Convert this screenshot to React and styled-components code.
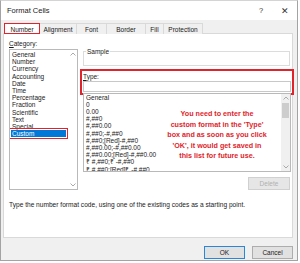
import styled, { createGlobalStyle } from "styled-components";

const GlobalStyle = createGlobalStyle`
  html, body {
    margin: 0;
    padding: 0;
    background: #ffffff;
  }
  * {
    box-sizing: border-box;
  }
`;

const RED = "#e0242b";
const FONT = `"Liberation Sans", Arial, sans-serif`;

const categories = [
  "General",
  "Number",
  "Currency",
  "Accounting",
  "Date",
  "Time",
  "Percentage",
  "Fraction",
  "Scientific",
  "Text",
  "Special",
  "Custom",
];

const formats = [
  "General",
  "0",
  "0.00",
  "#,##0",
  "#,##0.00",
  "#,##0;-#,##0",
  "#,##0;[Red]-#,##0",
  "#,##0.00;-#,##0.00",
  "#,##0.00;[Red]-#,##0.00",
  "₹ #,##0;₹ -#,##0",
  "₹ #,##0;[Red]₹ -#,##0",
];

const noteLines = [
  "You need to enter the",
  "custom format in the 'Type'",
  "box and as soon as you click",
  "'OK', it would get saved in",
  "this list for future use.",
];

const tabs = ["Number", "Alignment", "Font", "Border", "Fill", "Protection"];

const Window = styled.div`
  width: 298px;
  height: 261px;
  background: #f0f0f0;
  border: 1px solid #a3a3a3;
  border-top-color: #d4d4d4;
  display: flex;
  flex-direction: column;
  font-family: ${FONT};
  color: #1a1a1a;
`;

const TitleBar = styled.div`
  height: 19px;
  background: #ffffff;
  display: flex;
  align-items: center;
  padding-left: 6px;
  font-size: 7.5px;
`;

const Title = styled.span`
  flex: 1;
`;

const TitleButton = styled.span`
  width: 24px;
  text-align: center;
  font-size: ${(p) => (p.$big ? "9px" : "7.5px")};
  color: #333;
`;

const Body = styled.div`
  padding: 3px 4px 0 2px;
  display: flex;
  flex-direction: column;
`;

const TabRow = styled.div`
  display: flex;
  height: 11px;
  padding-left: 2px;
`;

const Tab = styled.div`
  height: 11px;
  width: ${(p) => p.$w}px;
  display: flex;
  align-items: center;
  justify-content: center;
  font-size: 6.5px;
  background: ${(p) => (p.$active ? "#ffffff" : "#f0f0f0")};
  border: 1px solid #d9d9d9;
  border-bottom: none;
  margin-left: -1px;
  position: relative;
  z-index: ${(p) => (p.$active ? 2 : 1)};
  outline: ${(p) => (p.$marked ? `1.5px solid ${RED}` : "none")};
  outline-offset: -1px;
`;

const Panel = styled.div`
  height: 205px;
  margin-top: -1px;
  background: #ffffff;
  border: 1px solid #d9d9d9;
  display: grid;
  grid-template-columns: 69px 208px;
  column-gap: 5px;
  grid-template-rows: 150px auto;
  padding: 6px 0 0 5px;
  position: relative;
`;

const LeftCol = styled.div`
  display: flex;
  flex-direction: column;
`;

const Label = styled.div`
  font-size: 6.5px;
  height: 9px;
  line-height: 8px;
`;

const ListBox = styled.div`
  border: 1px solid #b9b9b9;
  display: flex;
  height: ${(p) => p.$h}px;
  background: #fff;
  overflow: hidden;
`;

const ListItems = styled.div`
  flex: 1;
  padding: ${(p) => (p.$tight ? "0" : "1px")} 0 0 1px;
  display: flex;
  flex-direction: column;
`;

const ListItem = styled.div`
  font-size: 6.5px;
  height: 7.2px;
  flex-shrink: 0;
  line-height: 7.2px;
  padding-left: 1px;
  white-space: nowrap;
  background: ${(p) => (p.$selected ? "#0078d7" : "transparent")};
  color: ${(p) => (p.$selected ? "#ffffff" : "#1a1a1a")};
  outline: ${(p) => (p.$marked ? `1.5px solid ${RED}` : "none")};
  outline-offset: 1px;
  margin-right: ${(p) => (p.$selected ? "2px" : "0")};
`;

const ScrollBar = styled.div`
  width: 9px;
  display: flex;
  flex-direction: column;
  align-items: center;
  justify-content: space-between;
  background: ${(p) => (p.$track ? "#f0f0f0" : "#ffffff")};
  padding: 2px 0;
`;

const Thumb = styled.div`
  width: 7px;
  height: 15px;
  background: #cdcdcd;
  margin-top: 3px;
`;

const ScrollFill = styled.div`
  flex: 1;
`;

const Arrow = ({ up }) => (
  <svg width="6" height="4" viewBox="0 0 6 4">
    <path
      d={up ? "M0.5 3.5 L3 1 L5.5 3.5" : "M0.5 0.5 L3 3 L5.5 0.5"}
      fill="none"
      stroke="#a0a0a0"
      strokeWidth="0.9"
    />
  </svg>
);

const RightCol = styled.div`
  display: flex;
  flex-direction: column;
  padding-top: 10px;
  position: relative;
`;

const SampleBox = styled.fieldset`
  margin: 0;
  height: 18px;
  border: 1px solid #dcdcdc;
  padding: 0 0 0 2px;
  margin-top: -2px;
  margin-right: 1px;
`;

const Legend = styled.legend`
  font-size: 6.5px;
  padding: 0 1px;
  margin-left: 0;
  line-height: 7px;
`;

const TypeField = styled.div`
  margin-top: 5px;
  display: flex;
  flex-direction: column;
  outline: 2px solid ${RED};
  outline-offset: 0px;
  padding: 0 1px 1px 1px;
  margin-left: -1px;
  margin-right: -1px;
`;

const TypeLabel = styled.div`
  font-size: 6.5px;
  height: 10px;
  line-height: 9px;
  padding-top: 1px;
`;

const TypeInput = styled.div`
  height: 11px;
  border: 1px solid #c8c8c8;
  background: #fff;
`;

const Note = styled.div`
  position: absolute;
  left: 72px;
  top: 69px;
  width: 124px;
  text-align: center;
  color: ${RED};
  font-weight: bold;
  font-size: 7.2px;
  line-height: 10.6px;
  white-space: nowrap;
`;

const DeleteRow = styled.div`
  display: flex;
  justify-content: flex-end;
  margin-top: 5px;
  margin-right: 1px;
`;

const Button = styled.div`
  width: ${(p) => p.$w}px;
  height: 13px;
  display: flex;
  align-items: center;
  justify-content: center;
  font-size: 6.5px;
  background: ${(p) => (p.$disabled ? "#e6e6e6" : "#e1e1e1")};
  color: ${(p) => (p.$disabled ? "#b0b0b0" : "#1a1a1a")};
  border: 1px solid
    ${(p) => (p.$primary ? "#2a86d8" : p.$disabled ? "#d0d0d0" : "#adadad")};
`;

const Hint = styled.div`
  grid-column: 1 / span 2;
  font-size: 6.6px;
  padding-top: 11px;
  white-space: nowrap;
`;

const Footer = styled.div`
  display: flex;
  justify-content: flex-end;
  gap: 7px;
  padding: 8px 0 0 0;
`;

const App = () => {
  return (
    <>
      <GlobalStyle />
      <Window>
        <TitleBar>
          <Title>Format Cells</Title>
          <TitleButton>?</TitleButton>
          <TitleButton $big>✕</TitleButton>
        </TitleBar>

        <Body>
          <TabRow>
            {tabs.map((t, i) => (
              <Tab
                key={t}
                $w={[36, 38, 31, 40, 19, 40][i]}
                $active={i === 0}
                $marked={i === 0}
              >
                {t}
              </Tab>
            ))}
          </TabRow>

          <Panel>
            <LeftCol>
              <Label>
                <u>C</u>ategory:
              </Label>
              <ListBox $h={141}>
                <ListItems>
                  {categories.map((c) => (
                    <ListItem
                      key={c}
                      $selected={c === "Custom"}
                      $marked={c === "Custom"}
                    >
                      {c}
                    </ListItem>
                  ))}
                </ListItems>
                <ScrollBar>
                  <Arrow up />
                  <ScrollFill />
                  <Arrow />
                </ScrollBar>
              </ListBox>
            </LeftCol>

            <RightCol>
              <SampleBox>
                <Legend>Sample</Legend>
              </SampleBox>

              <TypeField>
                <TypeLabel>
                  <u>T</u>ype:
                </TypeLabel>
                <TypeInput />
              </TypeField>

              <ListBox $h={81}>
                <ListItems $tight>
                  {formats.map((f) => (
                    <ListItem key={f}>{f}</ListItem>
                  ))}
                </ListItems>
                <ScrollBar $track>
                  <Arrow up />
                  <Thumb />
                  <ScrollFill />
                  <Arrow />
                </ScrollBar>
              </ListBox>

              <Note>
                {noteLines.map((l) => (
                  <div key={l}>{l}</div>
                ))}
              </Note>

              <DeleteRow>
                <Button $w={42} $disabled>
                  Delete
                </Button>
              </DeleteRow>
            </RightCol>

            <Hint>
              Type the number format code, using one of the existing codes as a
              starting point.
            </Hint>
          </Panel>

          <Footer>
            <Button $w={41} $primary>
              OK
            </Button>
            <Button $w={41}>Cancel</Button>
          </Footer>
        </Body>
      </Window>
    </>
  );
};

export default App;
